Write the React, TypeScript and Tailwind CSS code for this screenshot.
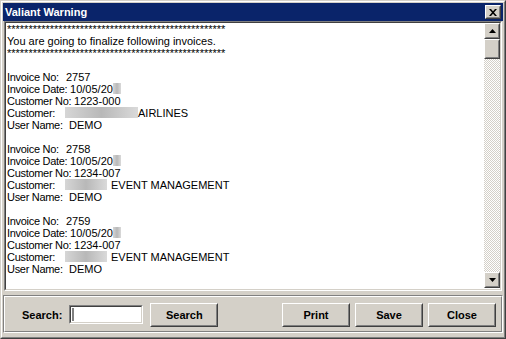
import React from "react";

const font = { fontFamily: '"Liberation Sans", Arial, sans-serif' };

function Raised({ className = "", children }: { className?: string; children?: React.ReactNode }) {
  return (
    <div className={`border border-t-white border-l-white border-r-[#404040] border-b-[#404040] bg-[#d4d0c8] ${className}`}>
      <div className="w-full h-full border border-t-[#d4d0c8] border-l-[#d4d0c8] border-r-[#808080] border-b-[#808080] flex items-center justify-center">
        {children}
      </div>
    </div>
  );
}

function Arrow({ down = false }: { down?: boolean }) {
  return (
    <svg width="7" height="4" viewBox="0 0 7 4" className="block">
      {down ? <polygon points="0,0 7,0 3.5,4" fill="#000" /> : <polygon points="3.5,0 7,4 0,4" fill="#000" />}
    </svg>
  );
}

function Blur({ w }: { w: number }) {
  return (
    <span
      className="inline-block h-[11px] align-[-1px] bg-gradient-to-r from-[#d6d6d6] via-[#b8b8b8] to-[#dadada]"
      style={{ width: w }}
    />
  );
}

function Line({ label, at, children }: { label: string; at: number; children?: React.ReactNode }) {
  return (
    <div className="h-[12px] whitespace-nowrap">
      <span className="inline-block whitespace-pre tracking-[-0.3px]" style={{ minWidth: at - 7 }}>
        {label + " "}
      </span>
      {children}
    </div>
  );
}

type Inv = { no: string; cust: string; blur: number; name: string; gap?: boolean };

const invoices: Inv[] = [
  { no: "2757", cust: "1223-000", blur: 73, name: "AIRLINES" },
  { no: "2758", cust: "1234-007", blur: 42, name: "EVENT MANAGEMENT", gap: true },
  { no: "2759", cust: "1234-007", blur: 42, name: "EVENT MANAGEMENT", gap: true },
];

function Invoice({ inv }: { inv: Inv }) {
  return (
    <>
      <Line label="Invoice No:" at={66}>{inv.no}</Line>
      <Line label="Invoice Date:" at={68}>
        10/05/20
        <Blur w={8} />
      </Line>
      <Line label="Customer No:" at={71}>{inv.cust}</Line>
      <Line label="Customer:" at={65}>
        <Blur w={inv.blur} />
        {inv.gap ? <span className="inline-block w-[4px]" /> : null}
        {inv.name}
      </Line>
      <Line label="User Name:" at={69}>DEMO</Line>
      <div className="h-[12px]" />
    </>
  );
}

function Btn({ label, className = "" }: { label: string; className?: string }) {
  return (
    <Raised className={`h-[24px] w-[68px] ${className}`}>
      <span className="text-[11px] font-bold text-black">{label}</span>
    </Raised>
  );
}

export default function App() {
  const stars = "*".repeat(51);
  return (
    <div className="w-[506px] h-[339px] overflow-hidden" style={font}>
      <div className="w-full h-full border border-t-[#d4d0c8] border-l-[#d4d0c8] border-r-[#404040] border-b-[#404040]">
        <div className="w-full h-full border border-t-white border-l-white border-r-[#808080] border-b-[#808080] bg-[#d4d0c8] p-px flex flex-col">
          {/* title bar */}
          <div className="h-[18px] bg-[#0a246a] flex items-center justify-between pl-[2px] pr-[2px] shrink-0">
            <span className="text-[11px] font-bold text-white leading-none">Valiant Warning</span>
            <Raised className="w-[16px] h-[14px]">
              <svg width="8" height="7" viewBox="0 0 8 7">
                <path d="M0 0h2l2 2.2L6 0h2L5 3.5 8 7H6L4 4.8 2 7H0l3-3.5z" fill="#000" />
              </svg>
            </Raised>
          </div>

          {/* text area */}
          <div className="mx-px h-[270px] shrink-0 border border-t-[#808080] border-l-[#808080] border-r-white border-b-white">
            <div className="w-full h-full border border-t-[#404040] border-l-[#404040] border-r-[#d4d0c8] border-b-[#d4d0c8] bg-white flex">
              <div className="flex-1 overflow-hidden pl-px text-[11px] leading-[12px] text-black">
                <div className="h-[12px] whitespace-nowrap">{stars}</div>
                <div className="h-[12px] whitespace-nowrap">You are going to finalize following invoices.</div>
                <div className="h-[12px] whitespace-nowrap">{stars}</div>
                <div className="h-[12px]" />
                {invoices.map((inv) => (
                  <Invoice key={inv.no} inv={inv} />
                ))}
                <Line label="Invoice No:" at={66}>2760</Line>
              </div>
              {/* scrollbar */}
              <div className="w-[16px] h-full flex flex-col shrink-0 pb-px">
                <Raised className="w-[16px] h-[16px]">
                  <Arrow />
                </Raised>
                <Raised className="w-[16px] h-[20px]" />
                <div className="flex-1 bg-[repeating-conic-gradient(#d4d0c8_0_25%,#ffffff_0_50%)] bg-[length:2px_2px]" />
                <Raised className="w-[16px] h-[16px]">
                  <Arrow down />
                </Raised>
              </div>
            </div>
          </div>

          {/* bottom group */}
          <div className="mt-[4px] h-[38px] shrink-0 border border-t-[#808080] border-l-[#808080] border-r-white border-b-white">
            <div className="w-full h-full border border-t-white border-l-white border-r-[#808080] border-b-[#808080] flex items-center pt-[2px] pl-[17px] pr-[5px]">
              <span className="text-[11px] font-bold text-black">Search:</span>
              <div className="ml-[7px] mb-[2px] w-[74px] h-[19px] border border-t-[#808080] border-l-[#808080] border-r-white border-b-white">
                <div className="w-full h-full border border-t-[#404040] border-l-[#404040] border-r-[#d4d0c8] border-b-[#d4d0c8] bg-white flex items-center">
                  <span className="ml-px w-[2px] h-[13px] bg-[#808080]" />
                </div>
              </div>
              <Btn label="Search" className="ml-[7px]" />
              <div className="flex-1" />
              <Btn label="Print" />
              <Btn label="Save" className="ml-[5px]" />
              <Btn label="Close" className="ml-[5px] w-[67px]" />
            </div>
          </div>
        </div>
      </div>
    </div>
  );
}
